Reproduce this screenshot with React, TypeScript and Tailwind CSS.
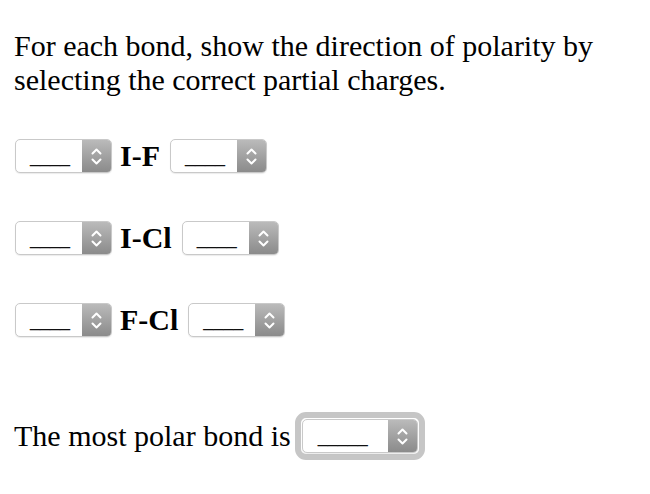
import React from "react";

function Chevrons() {
  return (
    <svg width="11" height="19" viewBox="0 0 11 19" fill="none" className="block">
      <path d="M1.5 6.5 L5.5 2.5 L9.5 6.5" stroke="white" strokeWidth="2" strokeLinecap="round" strokeLinejoin="round" />
      <path d="M1.5 12.5 L5.5 16.5 L9.5 12.5" stroke="white" strokeWidth="2" strokeLinecap="round" strokeLinejoin="round" />
    </svg>
  );
}

function Picker({ wide = false }: { wide?: boolean }) {
  return (
    <div
      className={`flex h-[34px] shrink-0 overflow-hidden rounded-[5px] border border-[#c9c9c9] bg-white shadow-[0_1px_1px_rgba(0,0,0,0.08)] ${
        wide ? "w-[116px]" : "w-[97px]"
      }`}
    >
      <div className="relative flex-1">
        <span
          className={`absolute top-[6px] text-[18px] leading-[20px] text-[#111] ${wide ? "left-[15px]" : "left-[14px]"}`}
          style={{ fontFamily: '"Liberation Sans", Arial, sans-serif' }}
        >
          {wide ? "_____" : "____"}
        </span>
      </div>
      <div className="flex w-[29px] items-center justify-center bg-gradient-to-b from-[#bababa] to-[#8b8b8b]">
        <Chevrons />
      </div>
    </div>
  );
}

function BondRow({ label }: { label: string }) {
  return (
    <div className="flex h-[34px] items-center">
      <Picker />
      <span className="ml-[8px] mr-[10px] font-bold leading-[34px]">{label}</span>
      <Picker />
    </div>
  );
}

export default function App() {
  return (
    <div
      className="min-h-[494px] w-[650px] bg-white px-[14px] pt-[29px] text-[30px] text-black"
      style={{ fontFamily: '"Liberation Serif", "Times New Roman", serif' }}
    >
      <p className="leading-[34px]">
        For each bond, show the direction of polarity by
        <br />
        selecting the correct partial charges.
      </p>

      <div className="mt-[42px] flex flex-col gap-[48px] pl-[1px]">
        <BondRow label="I-F" />
        <BondRow label="I-Cl" />
        <BondRow label="F-Cl" />
      </div>

      <div className="mt-[75px] flex items-center">
        <span className="leading-[34px]">The most polar bond is</span>
        <div className="ml-[4px] rounded-[11px] border-[6px] border-[#c6c6c6] bg-white p-[1px]">
          <Picker wide />
        </div>
      </div>
    </div>
  );
}
